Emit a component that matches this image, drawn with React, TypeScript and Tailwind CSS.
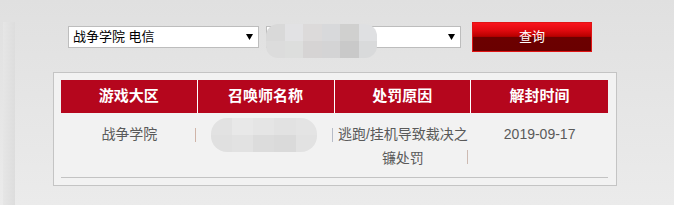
import React from "react";

const font = { fontFamily: '"Liberation Sans", "Noto Sans CJK SC", sans-serif' };

function Arrow() {
  return (
    <svg width="7" height="6" viewBox="0 0 7 6" className="shrink-0">
      <path d="M0 0H7L3.5 6Z" fill="#000" />
    </svg>
  );
}

function Mosaic({ rows, className }: { rows: string[][]; className: string }) {
  return (
    <div className={className}>
      {rows.map((r, i) => (
        <div key={i} className="flex flex-1">
          {r.map((c, j) => (
            <div key={j} className="flex-1" style={{ backgroundColor: c }} />
          ))}
        </div>
      ))}
    </div>
  );
}

export default function App() {
  return (
    <div
      className="flex h-[205px] w-[674px] overflow-hidden bg-[linear-gradient(to_bottom,#e0e0e0,#ebebeb)] text-[14px]"
      style={font}
    >
      <div className="ml-[3px] mt-[22px] w-[12px] bg-[linear-gradient(to_right,#e6e6e6,#dddddd)]" />
      <div className="ml-[38px] flex flex-col">
        <div className="flex h-[30px] items-center pl-[15px] mt-[22px]">
          <div className="flex h-[22px] w-[191px] items-center justify-between border border-[#bdbdbd] bg-white pl-[4px] pr-[5px] text-[13px] text-black">
            <span>战争学院 电信</span>
            <Arrow />
          </div>
          <div className="relative ml-[7px] flex h-[22px] w-[195px] items-center justify-end border border-[#bdbdbd] bg-white pr-[5px]">
            <Arrow />
            <Mosaic
              className="absolute left-[-1px] top-[-3px] flex h-[34px] w-[111px] flex-col overflow-hidden rounded-[12px]"
              rows={[
                ["#d9d9d9", "#e2e2e4", "#dcdada", "#d8d9db", "#d0d0cf", "#dfe0e2"],
                ["#dcdcdc", "#dddedd", "#d6d4d4", "#d4d4d5", "#c9c9c9", "#d9dadb"],
              ]}
            />
          </div>
          <button className="ml-[11px] flex h-[30px] w-[120px] items-center justify-center border border-[#e01414] bg-[linear-gradient(to_bottom,#f8141c_0%,#e20a10_25%,#b80000_48%,#6c0000_50%,#6a0000_100%)] text-[13px] text-white">
            查询
          </button>
        </div>

        <div className="mt-[20px] w-[564px] border border-[#c4c4c4] bg-[#f2f2f2] pb-[7px] pl-[7px] pr-[8px] pt-[7px]">
          <div className="grid h-[33px] grid-cols-4 divide-x divide-white bg-[#b5061d] text-[15px] font-bold text-white">
            {["游戏大区", "召唤师名称", "处罚原因", "解封时间"].map((t) => (
              <div key={t} className="flex items-center justify-center">
                {t}
              </div>
            ))}
          </div>
          <div className="grid grid-cols-4 border-b border-[#c3c3c3] pb-[7px] pt-[9px] leading-[24px] text-[#5a5a5a]">
            <div className="relative h-[48px] text-center">
              战争学院
              <div className="absolute right-[2px] top-[6px] h-[14px] w-px bg-[#cfb4a8]" />
            </div>
            <div className="relative h-[48px]">
              <Mosaic
                className="absolute left-[13px] top-[-4px] flex h-[34px] w-[106px] flex-col overflow-hidden rounded-[16px]"
                rows={[
                  ["#e2e2e2", "#e8e8e8", "#e5e5e5", "#e2e2e2", "#e4e4e4"],
                  ["#e0e0e0", "#e2e2e2", "#dcdcdc", "#dadada", "#e2e2e2"],
                ]}
              />
              <div className="absolute right-[2px] top-[6px] h-[14px] w-px bg-[#b6bcc8]" />
            </div>
            <div className="relative h-[48px] text-center">
              逃跑/挂机导致裁决之
              <br />
              镰处罚
              <div className="absolute right-[3px] top-[28px] h-[14px] w-px bg-[#cdbab2]" />
            </div>
            <div className="h-[48px] text-center">2019-09-17</div>
          </div>
        </div>
      </div>
    </div>
  );
}
